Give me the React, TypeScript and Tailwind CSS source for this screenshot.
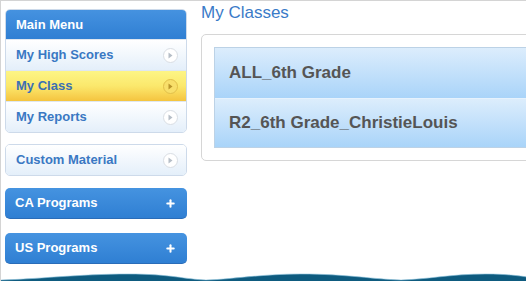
import { Plus } from 'lucide-react';

const font = { fontFamily: '"Liberation Sans", Arial, sans-serif' };

function ArrowDot({ active }: { active?: boolean }) {
  return (
    <span
      className={`flex h-[15px] w-[15px] items-center justify-center rounded-full border ${
        active ? 'border-[#e2c04a] bg-[#f8df6a]' : 'border-[#d9dee4] bg-white'
      }`}
    >
      <svg width="5" height="7" viewBox="0 0 5 7">
        <path d="M0.5 0.5 L4.5 3.5 L0.5 6.5 Z" fill={active ? '#b8952c' : '#b6bec7'} />
      </svg>
    </span>
  );
}

function MenuItem({ label, active, single }: { label: string; active?: boolean; single?: boolean }) {
  return (
    <div
      className={`flex items-center justify-between pl-[10px] pr-[8px] text-[13px] font-bold ${
        single ? 'h-[30px]' : 'h-[31px] border-t border-[#dfe7f0]'
      } ${
        active
          ? 'bg-gradient-to-b from-[#fdf585] via-[#fbe86c] to-[#f4c43e] text-[#3b70b4]'
          : 'bg-gradient-to-b from-white to-[#e4effa] text-[#3a78c3]'
      }`}
    >
      <span>{label}</span>
      <ArrowDot active={active} />
    </div>
  );
}

function BlueButton({ label }: { label: string }) {
  return (
    <div className="flex h-[31px] items-center justify-between rounded-[5px] border-b border-[#2a6cb8] bg-gradient-to-b from-[#4593e0] to-[#2f7fd3] pl-[10px] pr-[11px] text-[13px] font-bold text-white">
      <span>{label}</span>
      <Plus size={11} strokeWidth={4.5} className="text-white" />
    </div>
  );
}

export default function App() {
  return (
    <div
      className="flex h-[281px] w-[526px] flex-col overflow-hidden border-l border-t border-[#d4d4d4] bg-white"
      style={font}
    >
      <div className="flex flex-1">
        {/* Sidebar */}
        <div className="ml-[4px] mt-[8px] flex w-[182px] shrink-0 flex-col">
          <div className="overflow-hidden rounded-[5px] border border-[#cddaea]">
            <div className="flex h-[29px] items-center bg-gradient-to-b from-[#4592e0] to-[#2f7fd3] pl-[10px] text-[13px] font-bold text-white">
              Main Menu
            </div>
            <MenuItem label="My High Scores" />
            <MenuItem label="My Class" active />
            <MenuItem label="My Reports" />
          </div>

          <div className="mt-[11px] overflow-hidden rounded-[5px] border border-[#cddaea]">
            <MenuItem label="Custom Material" single />
          </div>

          <div className="mt-[12px]">
            <BlueButton label="CA Programs" />
          </div>
          <div className="mt-[14px]">
            <BlueButton label="US Programs" />
          </div>
        </div>

        {/* Main content */}
        <div className="ml-[14px] flex min-w-0 flex-1 flex-col">
          <h1 className="mt-[1px] text-[17px] font-normal leading-[22px] text-[#3a7bc8]">My Classes</h1>
          <div className="mt-[10px] w-[360px] shrink-0 rounded-[5px] border border-[#d6d6d6] p-[12px]">
            <div className="border border-[#bcd2e6]">
              <div className="flex h-[50px] items-center bg-gradient-to-b from-[#dcedfc] to-[#a9d4f9] pl-[14px] text-[17px] font-bold text-[#555]">
                ALL_6th Grade
              </div>
              <div className="flex h-[49px] items-center border-t border-[#e6f2fd] bg-gradient-to-b from-[#dcedfc] to-[#a9d4f9] pl-[14px] text-[17px] font-bold text-[#555]">
                R2_6th Grade_ChristieLouis
              </div>
            </div>
          </div>
        </div>
      </div>

      {/* Footer wave */}
      <svg className="block shrink-0" width="526" height="9" viewBox="0 0 526 9">
        <path
          d="M0,8 C30,7.5 80,2 127,2 C170,2 185,7.5 205,8 C230,7.5 260,2 300,2 C345,2 375,7.5 400,8 C425,7.5 450,2 485,2 C505,2 520,4 526,5 L526,9 L0,9 Z"
          fill="#0e5b7f"
        />
        <path
          d="M0,8 C30,7.5 80,2 127,2 C170,2 185,7.5 205,8 C230,7.5 260,2 300,2 C345,2 375,7.5 400,8 C425,7.5 450,2 485,2 C505,2 520,4 526,5"
          fill="none"
          stroke="#8cc3de"
          strokeWidth="0.6"
        />
      </svg>
    </div>
  );
}
